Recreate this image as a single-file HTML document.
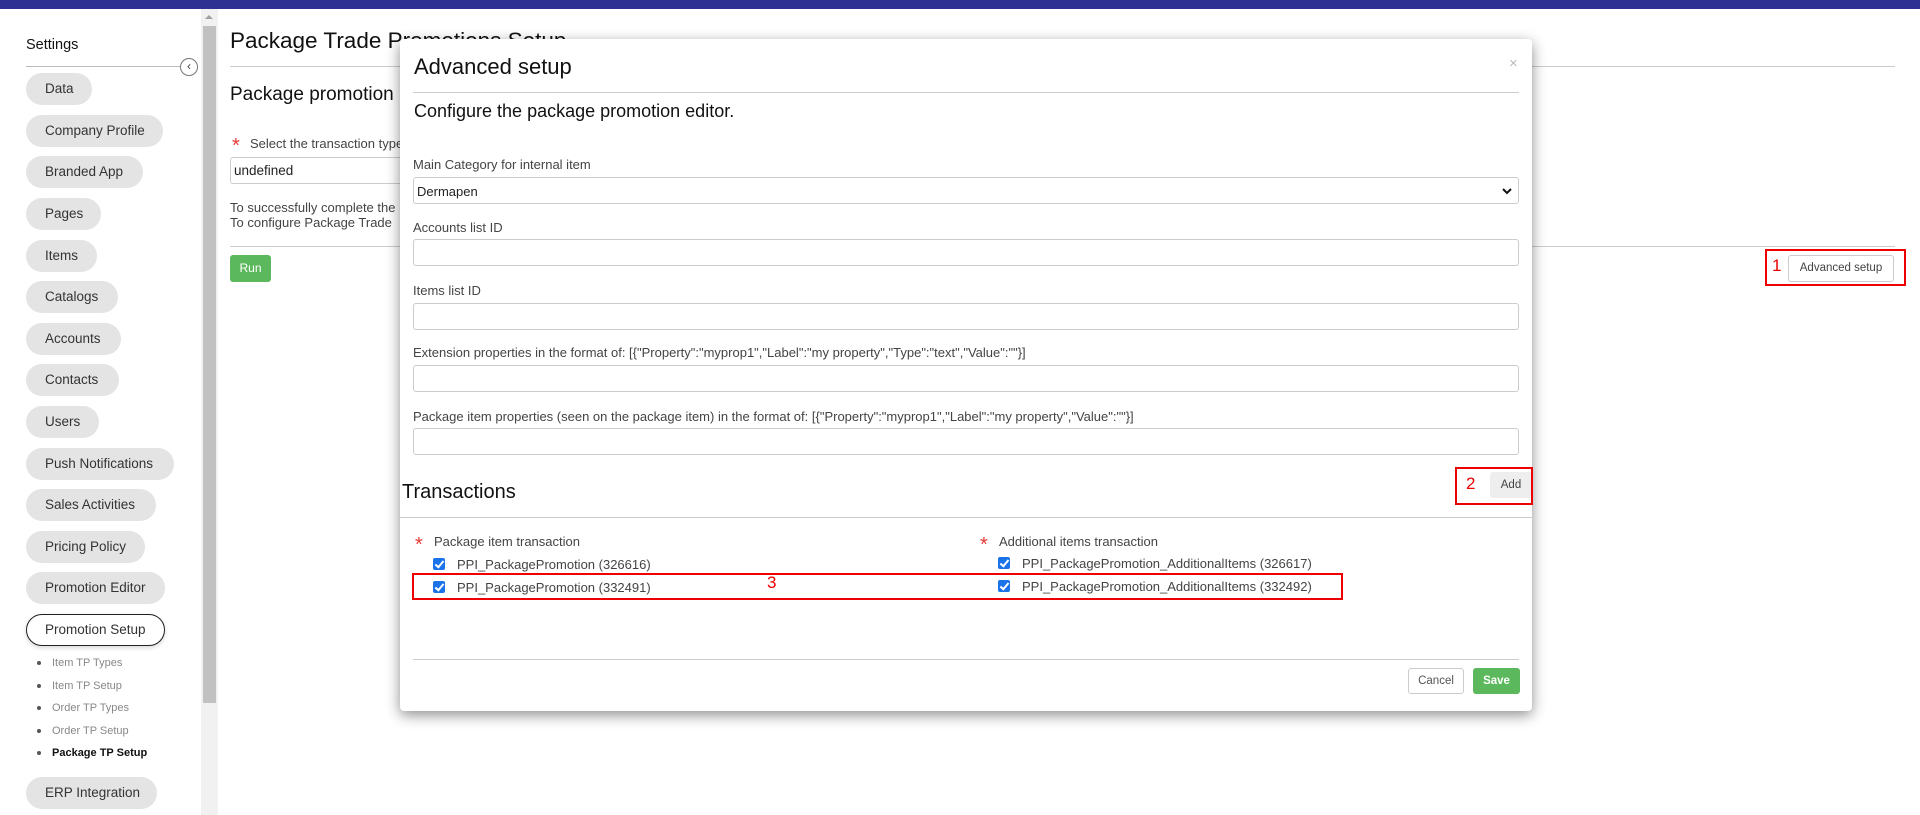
<!DOCTYPE html>
<html><head><meta charset="utf-8">
<style>
*{box-sizing:border-box;margin:0;padding:0}
body{width:1920px;height:815px;overflow:hidden;background:#fff;font-family:"Liberation Sans",sans-serif;color:#333;position:relative}
.a{position:absolute}
.top{left:0;top:0;width:1920px;height:9px;background:#2e3192}
.pill{position:absolute;left:26px;height:32px;border-radius:16px;background:#e4e4e4;font-size:13.5px;color:#333;padding-left:19px;line-height:32px}
.sub{position:absolute;left:37px;font-size:11px;color:#888;line-height:14px}
.sub:before{content:"";position:absolute;left:0;top:5px;width:4px;height:4px;border-radius:2px;background:#555}
.sub span{margin-left:15px}
.inp{position:absolute;border:1px solid #ccc;border-radius:3px;background:#fff}
.lbl{position:absolute;font-size:13px;color:#444}
.cb{position:absolute;width:12px;height:12px;background:#1a73e8;border-radius:2px}
.cb:after{content:"";position:absolute;left:4px;top:1px;width:3px;height:7px;border:solid #fff;border-width:0 2px 2px 0;transform:rotate(40deg)}
.red{position:absolute;border:2px solid #e00}
.rn{position:absolute;color:#e00;font-size:17px}
.ast{position:absolute;color:#e53935;font-size:20px;line-height:20px}
</style></head><body>
<div class="a top"></div>
<div class="a" style="left:26px;top:37px;font-size:14.5px;color:#111">Settings</div>
<div class="a" style="left:26px;top:66px;width:162px;height:1px;background:#bbb"></div>
<div class="a" style="left:180px;top:58px;width:18px;height:18px;border:1.5px solid #777;border-radius:50%;background:#fff;font-size:12px;line-height:14px;text-align:center;color:#444">‹</div>
<div class="pill" style="top:73px;width:66px">Data</div>
<div class="pill" style="top:115px;width:137px">Company Profile</div>
<div class="pill" style="top:156px;width:117px">Branded App</div>
<div class="pill" style="top:198px;width:75px">Pages</div>
<div class="pill" style="top:240px;width:71px">Items</div>
<div class="pill" style="top:281px;width:92px">Catalogs</div>
<div class="pill" style="top:323px;width:95px">Accounts</div>
<div class="pill" style="top:364px;width:93px">Contacts</div>
<div class="pill" style="top:406px;width:73px">Users</div>
<div class="pill" style="top:448px;width:148px">Push Notifications</div>
<div class="pill" style="top:489px;width:130px">Sales Activities</div>
<div class="pill" style="top:531px;width:119px">Pricing Policy</div>
<div class="pill" style="top:572px;width:139px">Promotion Editor</div>
<div class="pill" style="top:614px;width:139px;background:#fff;border:1.3px solid #222;line-height:30px;padding-left:18px;box-shadow:0 2px 5px rgba(0,0,0,.15)">Promotion Setup</div>
<div class="sub" style="top:656px"><span>Item TP Types</span></div>
<div class="sub" style="top:679px"><span>Item TP Setup</span></div>
<div class="sub" style="top:701px"><span>Order TP Types</span></div>
<div class="sub" style="top:724px"><span>Order TP Setup</span></div>
<div class="sub" style="top:746px;color:#111;font-weight:bold"><span>Package TP Setup</span></div>
<div class="pill" style="top:777px;width:131px">ERP Integration</div>
<div class="a" style="left:201px;top:9px;width:17px;height:806px;background:#f1f1f1"></div>
<div class="a" style="left:203px;top:26px;width:13px;height:677px;background:#c1c1c1"></div>
<div class="a" style="left:205px;top:15px;width:0;height:0;border-left:4px solid transparent;border-right:4px solid transparent;border-bottom:4px solid #a0a0a0"></div>
<div class="a" style="left:230px;top:28px;font-size:22.5px;color:#111">Package Trade Promotions Setup</div>
<div class="a" style="left:230px;top:66px;width:1665px;height:1px;background:#ccc"></div>
<div class="a" style="left:230px;top:84px;font-size:19px;color:#111">Package promotion</div>
<div class="ast" style="left:232px;top:136px">*</div>
<div class="lbl" style="left:250px;top:136px">Select the transaction type</div>
<div class="inp" style="left:230px;top:157px;width:180px;height:27px;font-size:13.5px;padding:5px 3px;color:#222">undefined</div>
<div class="lbl" style="left:230px;top:200px">To successfully complete the</div>
<div class="lbl" style="left:230px;top:215px">To configure Package Trade</div>
<div class="a" style="left:230px;top:246px;width:1665px;height:1px;background:#ccc"></div>
<div class="a" style="left:230px;top:255px;width:41px;height:27px;background:#5cb85c;border-radius:3px;color:#fff;font-size:12px;line-height:27px;text-align:center">Run</div>
<div class="a" style="left:1788px;top:255px;width:106px;height:27px;border:1px solid #ccc;border-radius:3px;font-size:11.5px;line-height:25px;text-align:center;color:#444">Advanced setup</div>
<div class="red" style="left:1765px;top:249px;width:141px;height:37px"></div>
<div class="rn" style="left:1772px;top:256px">1</div>
<div class="a" style="left:400px;top:39px;width:1132px;height:672px;background:#fff;border-radius:4px;box-shadow:0 4px 14px rgba(0,0,0,.45)"></div>
<div class="a" style="left:414px;top:54px;font-size:22px;color:#111">Advanced setup</div>
<div class="a" style="left:1509px;top:55px;font-size:15px;color:#bbb">×</div>
<div class="a" style="left:413px;top:92px;width:1106px;height:1px;background:#ccc"></div>
<div class="a" style="left:414px;top:101px;font-size:18px;color:#111">Configure the package promotion editor.</div>
<div class="lbl" style="left:413px;top:157px">Main Category for internal item</div>
<div class="inp" style="left:413px;top:177px;width:1106px;height:27px;font-size:13px;padding:6px 3px;color:#222">Dermapen
<svg class="a" style="right:6px;top:9px" width="10" height="8" viewBox="0 0 10 8"><path d="M1 2 L5 6 L9 2" stroke="#111" stroke-width="2" fill="none"/></svg></div>
<div class="lbl" style="left:413px;top:220px">Accounts list ID</div>
<div class="inp" style="left:413px;top:239px;width:1106px;height:27px"></div>
<div class="lbl" style="left:413px;top:283px">Items list ID</div>
<div class="inp" style="left:413px;top:303px;width:1106px;height:27px"></div>
<div class="lbl" style="left:413px;top:345px">Extension properties in the format of: [{"Property":"myprop1","Label":"my property","Type":"text","Value":""}]</div>
<div class="inp" style="left:413px;top:365px;width:1106px;height:27px"></div>
<div class="lbl" style="left:413px;top:409px">Package item properties (seen on the package item) in the format of: [{"Property":"myprop1","Label":"my property","Value":""}]</div>
<div class="inp" style="left:413px;top:428px;width:1106px;height:27px"></div>
<div class="a" style="left:402px;top:481px;font-size:20px;color:#111">Transactions</div>
<div class="a" style="left:1490px;top:472px;width:42px;height:26px;background:#eee;border-radius:3px;font-size:11.5px;line-height:26px;text-align:center;color:#444">Add</div>
<div class="red" style="left:1455px;top:467px;width:78px;height:38px"></div>
<div class="rn" style="left:1466px;top:474px">2</div>
<div class="a" style="left:400px;top:517px;width:1132px;height:1px;background:#ccc"></div>
<div class="ast" style="left:415px;top:535px">*</div>
<div class="lbl" style="left:434px;top:534px">Package item transaction</div>
<div class="cb" style="left:433px;top:558px"></div>
<div class="lbl" style="left:457px;top:557px">PPI_PackagePromotion (326616)</div>
<div class="cb" style="left:433px;top:581px"></div>
<div class="lbl" style="left:457px;top:580px">PPI_PackagePromotion (332491)</div>
<div class="ast" style="left:980px;top:535px">*</div>
<div class="lbl" style="left:999px;top:534px">Additional items transaction</div>
<div class="cb" style="left:998px;top:557px"></div>
<div class="lbl" style="left:1022px;top:556px">PPI_PackagePromotion_AdditionalItems (326617)</div>
<div class="cb" style="left:998px;top:580px"></div>
<div class="lbl" style="left:1022px;top:579px">PPI_PackagePromotion_AdditionalItems (332492)</div>
<div class="red" style="left:412px;top:573px;width:931px;height:27px"></div>
<div class="rn" style="left:767px;top:573px">3</div>
<div class="a" style="left:413px;top:659px;width:1106px;height:1px;background:#ccc"></div>
<div class="a" style="left:1408px;top:668px;width:56px;height:26px;border:1px solid #ccc;border-radius:3px;font-size:11.5px;line-height:24px;text-align:center;color:#555">Cancel</div>
<div class="a" style="left:1473px;top:668px;width:47px;height:26px;background:#5cb85c;border-radius:3px;font-size:11.5px;line-height:26px;text-align:center;color:#fff;font-weight:bold">Save</div>
</body></html>
